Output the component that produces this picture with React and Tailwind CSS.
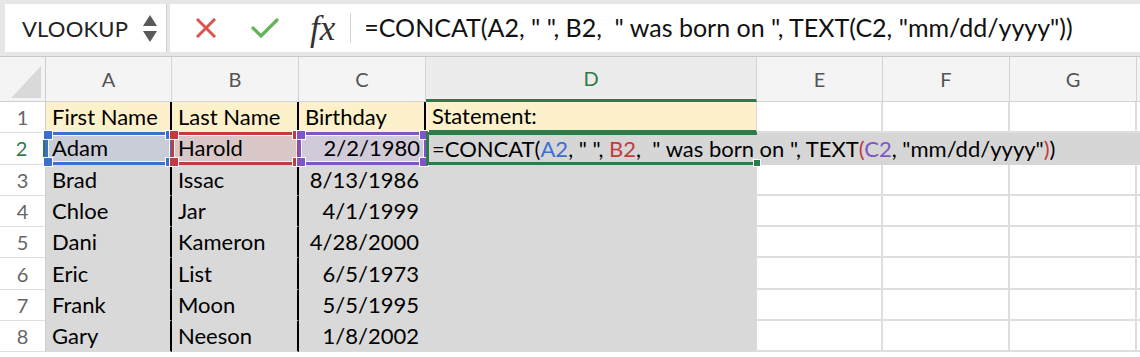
import React from 'react';

const rows = [
  ['First Name', 'Last Name', 'Birthday'],
  ['Adam', 'Harold', '2/2/1980'],
  ['Brad', 'Issac', '8/13/1986'],
  ['Chloe', 'Jar', '4/1/1999'],
  ['Dani', 'Kameron', '4/28/2000'],
  ['Eric', 'List', '6/5/1973'],
  ['Frank', 'Moon', '5/5/1995'],
  ['Gary', 'Neeson', '1/8/2002'],
];

const Corner = ({ color, pos }) => (
  <span className={`absolute w-[10px] h-[10px] border border-white ${color} ${pos}`} />
);

const RangeBox = ({ border, fill }) => (
  <div className={`absolute inset-[-1px] border-[3px] ${border} pointer-events-none`}>
    <div className="absolute inset-0 border border-white/80" />
    <Corner color={fill} pos="-top-[5px] -left-[5px]" />
    <Corner color={fill} pos="-top-[5px] -right-[5px]" />
    <Corner color={fill} pos="-bottom-[5px] -left-[5px]" />
    <Corner color={fill} pos="-bottom-[5px] -right-[5px]" />
  </div>
);

const cell = 'flex items-center px-[6px] border-b border-[#dadada] whitespace-nowrap';

export default function App() {
  return (
    <div className="w-[1140px] h-[357px] overflow-hidden bg-white font-['Lato',sans-serif] text-black">
      {/* formula toolbar */}
      <div className="flex h-[57px] bg-[#e6e6e6] border-b border-[#c9c9c9] pt-[4px] pb-[4px]">
        <div className="ml-[5px] w-[162px] bg-white flex items-center justify-between pl-[17px] pr-[9px] border-r border-[#cfcfcf]">
          <span className="text-[22px] text-[#222] tracking-[0.2px]">VLOOKUP</span>
          <div className="flex flex-col gap-[5px]">
            <svg width="14" height="11" viewBox="0 0 14 11"><path d="M7 0 L14 11 L0 11 Z" fill="#5a5a5a" /></svg>
            <svg width="14" height="11" viewBox="0 0 14 11"><path d="M0 0 L14 0 L7 11 Z" fill="#5a5a5a" /></svg>
          </div>
        </div>
        <div className="ml-[3px] flex-1 bg-white flex items-center">
          <svg className="ml-[26px]" width="20" height="20" viewBox="0 0 20 20">
            <path d="M2 2 L18 18 M18 2 L2 18" stroke="#d9534f" strokeWidth="3" strokeLinecap="square" />
          </svg>
          <svg className="ml-[35px]" width="28" height="22" viewBox="0 0 28 22">
            <path d="M2 11 L10 19 L26 3" stroke="#63b45a" strokeWidth="3.2" fill="none" strokeLinecap="round" strokeLinejoin="round" />
          </svg>
          <span className="ml-[31px] font-['Liberation_Serif',serif] italic text-[35px] text-[#333] leading-none">fx</span>
          <div className="ml-[15px] w-px h-[30px] bg-[#d4d4d4]" />
          <span className="ml-[13px] text-[25px] text-[#111] whitespace-pre">{'=CONCAT(A2, " ", B2,  " was born on ", TEXT(C2, "mm/dd/yyyy"))'}</span>
        </div>
      </div>

      {/* sheet */}
      <div className="grid grid-cols-[46px_126px_127px_127px_331px_126px_127px_127px_1fr] grid-rows-[45px_repeat(8,31.3px)_1fr] text-[22px] leading-none">
        {/* header row */}
        <div className="bg-[#f4f4f4] border-r border-b border-[#cfcfcf] flex items-end justify-end pr-[4px] pb-[3px]">
          <svg width="30" height="32" viewBox="0 0 30 32"><path d="M30 0 L30 32 L0 32 Z" fill="#d9d9d9" /></svg>
        </div>
        {['A', 'B', 'C'].map((c) => (
          <div key={c} className="bg-[#f4f4f4] border-r border-b border-[#d3d3d3] flex items-center justify-center text-[20px] text-[#555]">{c}</div>
        ))}
        <div className="bg-[#ececec] border-r border-[#d3d3d3] border-b-[3px] border-b-[#2f7a4a] flex items-center justify-center text-[20px] text-[#2f7a4a]">D</div>
        {['E', 'F', 'G'].map((c) => (
          <div key={c} className="bg-[#f4f4f4] border-r border-b border-[#d3d3d3] flex items-center justify-center text-[20px] text-[#555]">{c}</div>
        ))}
        <div className="bg-[#f4f4f4] border-b border-[#d3d3d3]" />

        {rows.map((r, i) => {
          const n = i + 1;
          const head = n === 1;
          const active = n === 2;
          const fill = head ? 'bg-[#fdf1cb]' : 'bg-[#d9d9d9]';
          return (
            <React.Fragment key={n}>
              <div className={`flex items-center justify-center bg-white border-b border-[#e0e0e0] text-[20px] ${active ? 'text-[#2f7a4a] border-r-[3px] border-r-[#2f7a4a]' : 'text-[#666] border-r border-r-[#cfcfcf]'}`}>{n}</div>

              {active ? (
                <>
                  <div className={`${cell} relative bg-[#c9cdd8]`}>
                    {r[0]}
                    <RangeBox border="border-[#3d6fd1]" fill="bg-[#3d6fd1]" />
                  </div>
                  <div className={`${cell} relative bg-[#d9c7c7]`}>
                    {r[1]}
                    <RangeBox border="border-[#c23b3f]" fill="bg-[#c23b3f]" />
                  </div>
                  <div className={`${cell} relative justify-end bg-[#d0cad9]`}>
                    {r[2]}
                    <RangeBox border="border-[#7e56c6]" fill="bg-[#7e56c6]" />
                  </div>
                  <div className={`${cell} col-span-5 relative bg-[#d6d6d6] border-b-0`}>
                    <div className="absolute left-0 top-[-1px] w-[331px] h-[33px] border-[3px] border-[#2f7a4a] border-r-0">
                      <span className="absolute -right-[4px] -bottom-[5px] w-[8px] h-[8px] bg-[#2f7a4a] border border-white" />
                    </div>
                    <span className="relative whitespace-pre">
                      =CONCAT(<span className="text-[#3d6fd1]">A2</span>, " ", <span className="text-[#c23b3f]">B2</span>,  " was born on ", TEXT<span className="text-[#c23b3f]">(</span><span className="text-[#7e56c6]">C2</span>, "mm/dd/yyyy"<span className="text-[#c23b3f]">)</span>)
                    </span>
                  </div>
                </>
              ) : (
                <>
                  <div className={`${cell} ${fill} border-r-2 border-r-black`}>{r[0]}</div>
                  <div className={`${cell} ${fill} border-r-2 border-r-black`}>{r[1]}</div>
                  <div className={`${cell} ${fill} ${head ? 'border-r-2 border-r-black' : 'border-r border-r-[#d9d9d9] justify-end'}`}>{r[2]}</div>
                  <div className={`${cell} ${fill} border-r border-r-[#dadada] ${head ? 'border-b-[3px] border-b-[#2f7a4a]' : ''}`}>{head ? 'Statement:' : ''}</div>
                  <div className="border-r-2 border-b-2 border-[#dedede]" />
                  <div className="border-r-2 border-b-2 border-[#dedede]" />
                  <div className="border-r-2 border-b-2 border-[#dedede]" />
                  <div className="border-b-2 border-[#dedede]" />
                </>
              )}
            </React.Fragment>
          );
        })}

        {/* partial row 9 */}
        <div className="bg-white border-r border-[#cfcfcf]" />
        {Array.from({ length: 7 }).map((_, k) => (
          <div key={k} className="border-r border-[#dedede]" />
        ))}
        <div />
      </div>
    </div>
  );
}
